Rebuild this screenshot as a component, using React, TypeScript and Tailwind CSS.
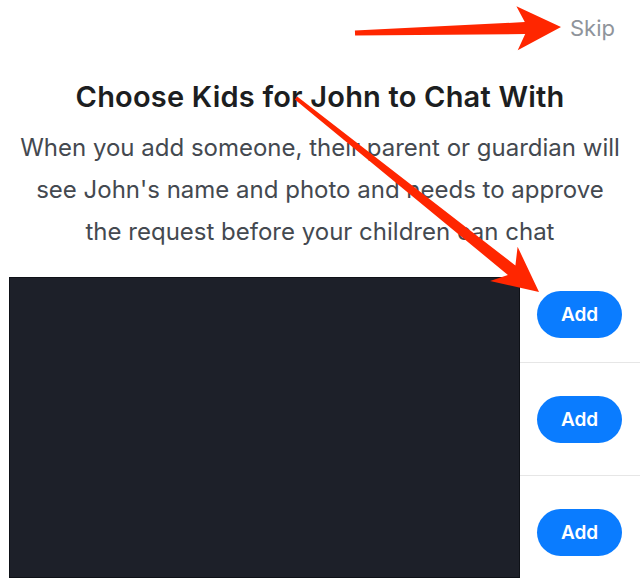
import React from "react";

type Pt = [number, number];

// builds the outline of a tapered "annotation" arrow with a concave head
function arrowPoints(tail: Pt, tip: Pt, tailW = 4, shaftW = 12, headLen = 45, headHalf = 22, notch = 34) {
  const dx = tip[0] - tail[0];
  const dy = tip[1] - tail[1];
  const len = Math.hypot(dx, dy);
  const ux = dx / len;
  const uy = dy / len;
  const px = -uy;
  const py = ux;
  const at = (d: number, o: number): Pt => [tail[0] + ux * d + px * o, tail[1] + uy * d + py * o];
  const pts: Pt[] = [
    at(0, -tailW / 2),
    at(len - notch, -shaftW / 2),
    at(len - headLen, -headHalf),
    at(len, 0),
    at(len - headLen, headHalf),
    at(len - notch, shaftW / 2),
    at(0, tailW / 2),
  ];
  return pts.map((p) => `${p[0].toFixed(1)},${p[1].toFixed(1)}`).join(" ");
}

function AddButton() {
  return (
    <button className="w-[85px] h-[47px] rounded-full bg-[#0a7cff] text-white text-[19px] font-semibold leading-none">
      Add
    </button>
  );
}

export default function App() {
  return (
    <div
      className="relative w-[640px] h-[583px] overflow-hidden bg-white"
      style={{ fontFamily: "Inter, 'Noto Sans', sans-serif" }}
    >
      <div className="flex justify-end pr-[25px] pt-[14px]">
        <span className="text-[22px] leading-[28px] text-[#8f949b]">Skip</span>
      </div>

      <h1 className="mt-[38px] text-center text-[29px] leading-[34px] font-semibold text-[#1c1e21] tracking-[0.2px]">
        Choose Kids for John to Chat With
      </h1>

      <p className="mt-[13px] px-2 text-center text-[24px] leading-[42px] text-[#444950]">
        When you add someone, their parent or guardian will
        <br />
        see John's name and photo and needs to approve
        <br />
        the request before your children can chat
      </p>

      <div className="mt-[24px] flex">
        <div className="ml-[9px] w-[511px] h-[301px] bg-[#1d2029] border border-[#0e1117]" />
        <div className="flex-1 flex flex-col">
          <div className="pl-[17px] pt-[14px] pb-[24px] border-b border-[#e6e6e6]">
            <AddButton />
          </div>
          <div className="pl-[17px] pt-[33px] pb-[32px] border-b border-[#e6e6e6]">
            <AddButton />
          </div>
          <div className="pl-[17px] pt-[33px]">
            <AddButton />
          </div>
        </div>
      </div>

      <svg className="absolute inset-0 pointer-events-none" width="640" height="583" viewBox="0 0 640 583">
        <polygon points={arrowPoints([355, 33], [561, 27], 5, 12, 44, 22, 36)} fill="#ff2600" strokeLinejoin="round" />
        <polygon points={arrowPoints([296, 98], [539, 292], 4, 12, 45, 22, 35)} fill="#ff2600" strokeLinejoin="round" />
      </svg>
    </div>
  );
}
